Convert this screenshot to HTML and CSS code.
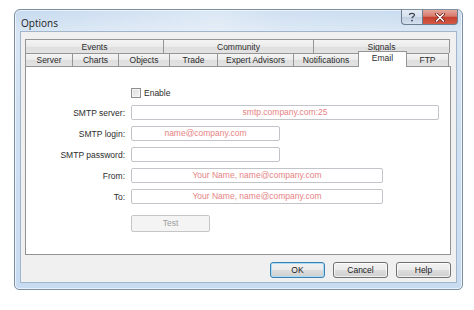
FILE: index.html
```html
<!DOCTYPE html>
<html>
<head>
<meta charset="utf-8">
<link rel="stylesheet" href="styles.css">
</head>
<body>
<div class="window">
  <div class="titlebar">
    <span class="title">Options</span>
    <div class="caption-btns">
      <div class="cbtn help">
        <svg width="8" height="10" viewBox="0 0 8 10"><path d="M1.5 3 C1.5 0.8 6.5 0.8 6.5 3 C6.5 4.6 4 4.6 4 6.3" fill="none" stroke="#3b4350" stroke-width="1.2"/><circle cx="4" cy="8.6" r="0.9" fill="#3b4350"/></svg>
      </div>
      <div class="cbtn close">
        <svg width="10" height="9" viewBox="0 0 10 9"><path d="M1.5 1 L8.5 8 M8.5 1 L1.5 8" stroke="#6b1b14" stroke-width="3" stroke-linecap="round"/><path d="M1.5 1 L8.5 8 M8.5 1 L1.5 8" stroke="#ffffff" stroke-width="1.6" stroke-linecap="round"/></svg>
      </div>
    </div>
  </div>
  <div class="client">
    <div class="tabs">
      <div class="tabrow">
        <div class="tab w-events">Events</div>
        <div class="tab w-community">Community</div>
        <div class="tab w-signals last">Signals</div>
      </div>
      <div class="tabrow">
        <div class="tab w-server">Server</div>
        <div class="tab w-charts">Charts</div>
        <div class="tab w-objects">Objects</div>
        <div class="tab w-trade">Trade</div>
        <div class="tab w-expert">Expert Advisors</div>
        <div class="tab w-notif">Notifications</div>
        <div class="tab w-email selected">Email</div>
        <div class="tab w-ftp last">FTP</div>
      </div>
    </div>
    <div class="panel">
      <div class="form">
        <div class="row enable-row">
          <span class="label"></span>
          <label class="check"><span class="box"></span><span>Enable</span></label>
        </div>
        <div class="row">
          <span class="label">SMTP server:</span>
          <div class="field w-long">smtp.company.com:25</div>
        </div>
        <div class="row">
          <span class="label">SMTP login:</span>
          <div class="field w-short">name@company.com</div>
        </div>
        <div class="row">
          <span class="label">SMTP password:</span>
          <div class="field w-short"></div>
        </div>
        <div class="row">
          <span class="label">From:</span>
          <div class="field w-mid">Your Name, name@company.com</div>
        </div>
        <div class="row">
          <span class="label">To:</span>
          <div class="field w-mid">Your Name, name@company.com</div>
        </div>
        <div class="row test-row">
          <span class="label"></span>
          <div class="btn-disabled">Test</div>
        </div>
      </div>
    </div>
    <div class="buttons">
      <div class="btn default">OK</div>
      <div class="btn">Cancel</div>
      <div class="btn">Help</div>
    </div>
  </div>
</div>
</body>
</html>
```

FILE: styles.css
```css
* { box-sizing: border-box; }
html, body { margin: 0; padding: 0; background: #ffffff; }
body {
  font-family: "Liberation Sans", Arial, sans-serif;
  font-size: 8.5px;
  color: #2c2c2c;
  width: 474px;
  height: 310px;
  overflow: hidden;
}
.window {
  margin: 9px 0 0 14px;
  width: 449px;
  height: 281px;
  border: 1px solid #7d8fa3;
  border-radius: 6px 6px 5px 5px;
  background: linear-gradient(180deg, #c6daef 0%, #d9e6f4 8%, #cfe0f2 40%, #c8dcf1 100%);
  padding: 0 5px 6px 5px;
  display: flex;
  flex-direction: column;
  box-shadow: inset 0 0 0 1px rgba(255,255,255,0.6);
}
.titlebar {
  height: 21px;
  display: flex;
  align-items: flex-start;
  justify-content: space-between;
  background: linear-gradient(90deg, rgba(255,255,255,0) 0%, rgba(255,255,255,0.35) 45%, rgba(255,255,255,0.15) 60%, rgba(255,255,255,0) 100%);
}
.title {
  font-family: "Open Sans", "Noto Sans", sans-serif;
  font-size: 10px;
  color: #1b1b1b;
  margin-top: 6px;
  padding-left: 1px;
}
.caption-btns {
  display: flex;
  margin-right: -1px;
}
.cbtn {
  height: 15px;
  border: 1px solid #6d7c8e;
  border-top: none;
  display: flex;
  align-items: center;
  justify-content: center;
}
.help {
  width: 21px;
  border-radius: 0 0 0 4px;
  background: linear-gradient(180deg, #e5ecf5 0%, #d4dfec 50%, #c1d0e2 52%, #d3e0ef 100%);
  border-right: none;
}
.close {
  width: 36px;
  border-radius: 0 0 4px 0;
  background: linear-gradient(180deg, #e6a79b 0%, #d77a6c 45%, #c5402f 52%, #d35a45 100%);
}
.client {
  height: 252px;
  border: 1px solid #a3b5ca;
  background: #f0f0f0;
  padding: 7px 5px 4px 4px;
  display: flex;
  flex-direction: column;
}
.tabs { display: flex; flex-direction: column; }
.tabrow { display: flex; }
.tabrow:first-child .tab { height: 14px; }
.tabrow:last-child .tab { height: 13px; }
.tab {
  border-top: 1px solid #959595;
  border-left: 1px solid #959595;
  background: linear-gradient(180deg, #f4f4f4 0%, #ebebeb 50%, #dedede 51%, #e3e3e3 100%);
  display: flex;
  align-items: center;
  justify-content: center;
  line-height: 1;
  padding-top: 1px;
  white-space: nowrap;
}
.tab.last { border-right: 1px solid #959595; }
.tab.selected {
  background: #ffffff;
  height: 16px !important;
  margin-top: -2px;
  margin-bottom: -1px;
  border-right: 1px solid #959595;
  margin-right: -1px;
  position: relative;
  z-index: 2;
  align-items: flex-start;
  padding-top: 2px;
}
.w-events { width: 138px; }
.w-community { width: 150px; }
.w-signals { width: 137px; }
.w-server { width: 47px; }
.w-charts { width: 46px; }
.w-objects { width: 51px; }
.w-trade { width: 48px; }
.w-expert { width: 76px; }
.w-notif { width: 65px; }
.w-email { width: 49px; }
.w-ftp { width: 43px; }
.panel {
  height: 189px;
  width: 426px;
  border: 1px solid #939393;
  background: #ffffff;
  position: relative;
  z-index: 1;
}
.form {
  display: flex;
  flex-direction: column;
  padding-top: 20px;
}
.row {
  display: flex;
  align-items: center;
  height: 15px;
  margin-bottom: 6px;
}
.label {
  width: 100px;
  text-align: right;
  padding-right: 1px;
  flex: none;
  margin-right: 5px;
}
.enable-row { height: 11px; margin-bottom: 7px; }
.check { display: flex; align-items: center; }
.box {
  width: 10px;
  height: 10px;
  border: 1px solid #8e8f8f;
  background: linear-gradient(135deg, #dcdcdc 0%, #f4f4f4 100%);
  box-shadow: inset 0 0 0 1px #f4f4f4;
  margin-right: 3px;
}
.field {
  height: 15px;
  border: 1px solid #c2c4c9;
  border-radius: 2px;
  background: #ffffff;
  color: #e68383;
  text-align: center;
  line-height: 13px;
}
.w-long { width: 308px; }
.w-short { width: 149px; }
.w-mid { width: 252px; }
.test-row { margin-top: 5px; height: 17px; }
.btn-disabled {
  width: 79px;
  height: 17px;
  border: 1px solid #c6c6c6;
  border-radius: 2px;
  background: #f4f4f4;
  color: #a0a0a0;
  text-align: center;
  line-height: 15px;
}
.buttons {
  display: flex;
  justify-content: flex-end;
  gap: 8px;
  margin-top: 7px;
  width: 426px;
}
.btn {
  width: 55px;
  height: 16px;
  border: 1px solid #707070;
  border-radius: 3px;
  background: linear-gradient(180deg, #f2f2f2 0%, #ebebeb 48%, #dddddd 52%, #cfcfcf 100%);
  box-shadow: inset 0 0 0 1px rgba(255,255,255,0.7);
  text-align: center;
  line-height: 14px;
  color: #1a1a1a;
}
.btn.default {
  border-color: #3c7fb1;
  box-shadow: inset 0 0 0 1px #a9dcf6;
}
```
